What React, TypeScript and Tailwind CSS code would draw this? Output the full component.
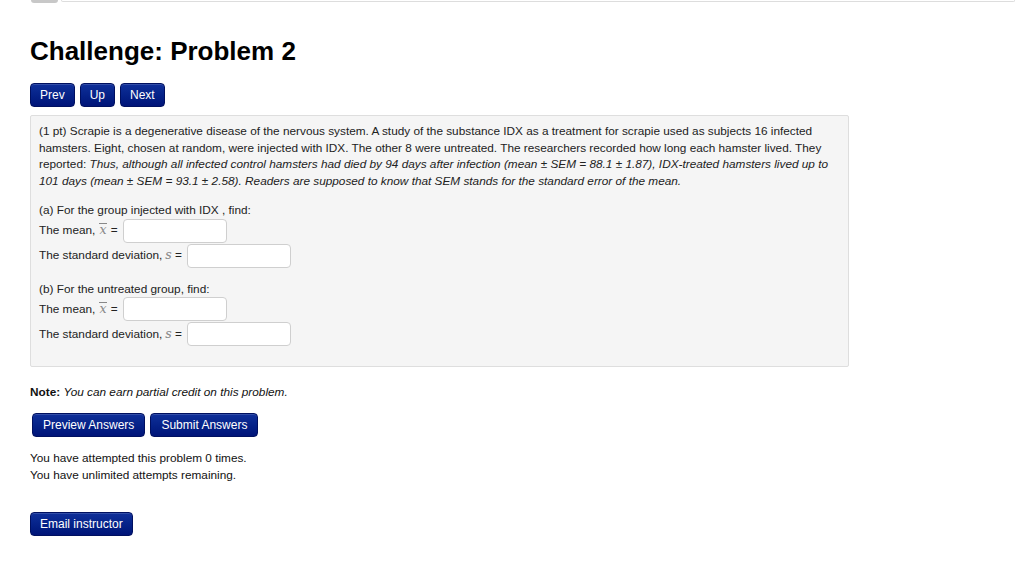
import React from "react";

const btn =
  "h-[24px] px-[9px] rounded-[4px] text-white text-[12px] leading-[22px] bg-gradient-to-b from-[#10309a] to-[#001478] border border-[#001060] shadow-[inset_0_1px_0_rgba(255,255,255,0.15)]";

function Xbar() {
  return (
    <span className="relative inline-block text-[#888] italic text-[12.5px] px-[1px]" style={{ fontFamily: '"DejaVu Serif", serif' }}>
      <span className="absolute left-[1px] right-0 top-[1px] h-px bg-[#888]" />
      x
    </span>
  );
}

function S() {
  return (
    <span className="italic text-[#888] text-[12.5px]" style={{ fontFamily: '"DejaVu Serif", serif' }}>
      s
    </span>
  );
}

function Field({ ml }: { ml: string }) {
  return (
    <input
      type="text"
      className={"h-[24px] w-[104px] bg-white border border-[#cfcfcf] rounded-[4px] " + ml}
    />
  );
}

export default function App() {
  return (
    <div
      className="w-[1024px] h-[574px] bg-white text-[#111] overflow-hidden"
      style={{ fontFamily: '"Liberation Sans", Arial, sans-serif' }}
    >
      <div className="flex items-start h-[3px]">
        <div className="ml-[31px] w-[27px] h-[3px] rounded-b-[3px] bg-[#c8c8c8]" />
        <div className="ml-[3px] w-[954px] h-[2px] border-b border-x border-[#dddddd] rounded-b-[2px]" />
      </div>
      <div className="pl-[30px]">
        <h1 className="mt-[30px] text-[26px] leading-[36px] font-bold text-black">Challenge: Problem 2</h1>
        <div className="flex gap-[5px] mt-[14px]">
          <button className={btn}>Prev</button>
          <button className={btn}>Up</button>
          <button className={btn}>Next</button>
        </div>
        <div className="mt-[8px] w-[819px] h-[252px] bg-[#f5f5f5] border border-[#dedede] rounded-[2px] px-[8px] pt-[7px] text-[11.8px] leading-[16.7px] text-[#222] whitespace-nowrap">
          <p>
            (1 pt) Scrapie is a degenerative disease of the nervous system. A study of the substance IDX as a
            treatment for scrapie used as subjects 16 infected
            <br />
            hamsters. Eight, chosen at random, were injected with IDX. The other 8 were untreated. The researchers
            recorded how long each hamster lived. They
            <br />
            reported:{" "}
            <i>
              Thus, although all infected control hamsters had died by 94 days after infection (mean ± SEM = 88.1 ±
              1.87), IDX-treated hamsters lived up to
              <br />
              101 days (mean ± SEM = 93.1 ± 2.58). Readers are supposed to know that SEM stands for the standard error
              of the mean.
            </i>
          </p>
          <p className="mt-[12px]">(a) For the group injected with IDX , find:</p>
          <div className="flex items-center h-[24px] mt-[0px]">
            The mean, <span className="ml-[3px]"><Xbar /></span>&nbsp;= <Field ml="ml-[5px]" />
          </div>
          <div className="flex items-center h-[24px] mt-[1px]">
            The standard deviation, <span className="ml-[3px]"><S /></span>&nbsp;= <Field ml="ml-[5px]" />
          </div>
          <p className="mt-[13px]">(b) For the untreated group, find:</p>
          <div className="flex items-center h-[24px] mt-[0px]">
            The mean, <span className="ml-[3px]"><Xbar /></span>&nbsp;= <Field ml="ml-[5px]" />
          </div>
          <div className="flex items-center h-[24px] mt-[1px]">
            The standard deviation, <span className="ml-[3px]"><S /></span>&nbsp;= <Field ml="ml-[5px]" />
          </div>
        </div>
        <p className="mt-[17px] text-[11.8px] leading-[16px] text-[#111]">
          <b>Note:</b> <i>You can earn partial credit on this problem.</i>
        </p>
        <div className="flex gap-[5px] mt-[13px] ml-[2px]">
          <button className={btn + " px-[10px]"}>Preview Answers</button>
          <button className={btn + " px-[10px]"}>Submit Answers</button>
        </div>
        <div className="mt-[13px] text-[11.8px] leading-[17px] text-[#111]">
          <p>You have attempted this problem 0 times.</p>
          <p>You have unlimited attempts remaining.</p>
        </div>
        <button className={btn + " mt-[28px]"}>Email instructor</button>
      </div>
    </div>
  );
}
